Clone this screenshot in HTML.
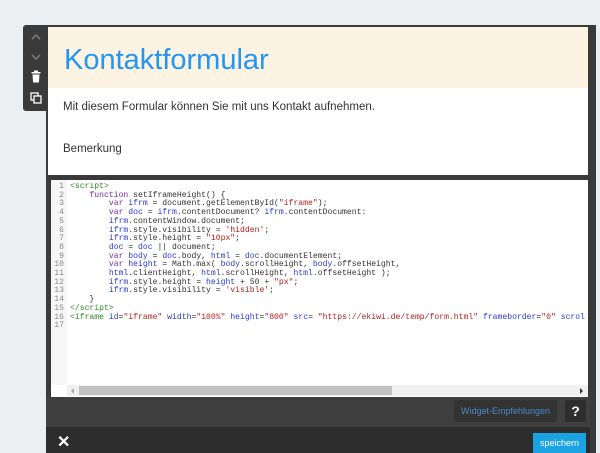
<!DOCTYPE html>
<html><head><meta charset="utf-8"><style>
body{margin:0;width:600px;height:453px;overflow:hidden;background:#eceff2;font-family:"Liberation Sans",sans-serif;position:relative}
.abs{position:absolute}
.code{font-family:"Liberation Mono",monospace;font-size:8.1px;line-height:8.7px;white-space:pre;color:#333}
.k{color:#7a2ca0}.v{color:#2a3ad0}.s{color:#b51d1d}.t{color:#2a8a2a}
</style></head><body>
<div class="abs" style="left:23px;top:25px;width:26px;height:86px;background:#3a3a3a;border-radius:3px 0 0 3px"></div>
<svg class="abs" style="left:28px;top:30px" width="16" height="78" viewBox="0 0 16 78">
<path d="M4 9 L8 5 L12 9" stroke="#777" stroke-width="1.6" fill="none"/>
<path d="M4 25 L8 29 L12 25" stroke="#777" stroke-width="1.6" fill="none"/>
<rect x="3.5" y="42" width="9" height="1.5" fill="#fff"/><rect x="6" y="40.5" width="4" height="1.5" fill="#fff"/>
<path d="M4.5 44.5 h7 l-0.6 8 h-5.8z" fill="#fff"/>
<rect x="3" y="63" width="7" height="7" fill="none" stroke="#fff" stroke-width="1.3"/>
<rect x="6" y="66" width="7" height="7" fill="#3a3a3a" stroke="#fff" stroke-width="1.3"/>
</svg>
<div class="abs" style="left:46px;top:25px;width:550px;height:428px;background:#3a3a3a"></div>
<div class="abs" style="left:48px;top:27px;width:540px;height:148px;background:#fff"></div>
<div class="abs" style="left:48px;top:27px;width:540px;height:61px;background:#fdf3e2"></div>
<div class="abs" style="left:64px;top:44px;font-size:29px;color:#2196f3">Kontaktformular</div>
<div class="abs" style="left:63px;top:101px;font-size:11.5px;color:#333">Mit diesem Formular können Sie mit uns Kontakt aufnehmen.</div>
<div class="abs" style="left:63px;top:143px;font-size:11.5px;color:#333">Bemerkung</div>
<div class="abs" style="left:51px;top:180px;width:537px;height:217px;background:#fff"></div>
<div class="abs" style="left:51px;top:180px;width:16px;height:205px;background:#f6f6f6"></div>
<div class="abs code" style="left:52px;top:183px;color:#888;text-align:right;width:12px">1
2
3
4
5
6
7
8
9
10
11
12
13
14
15
16
17</div>
<div class="abs code" style="left:70px;top:183px;width:516px;overflow:hidden"><span class="t">&lt;script&gt;</span>
    <span class="k">function</span> setIframeHeight() {
        <span class="k">var</span> <span class="v">ifrm</span> = document.getElementById(<span class="s">"iframe"</span>);
        <span class="k">var</span> <span class="v">doc</span> = <span class="v">ifrm</span>.contentDocument? <span class="v">ifrm</span>.contentDocument:
        <span class="v">ifrm</span>.contentWindow.document;
        <span class="v">ifrm</span>.style.visibility = <span class="s">'hidden'</span>;
        <span class="v">ifrm</span>.style.height = <span class="s">"10px"</span>;
        <span class="v">doc</span> = <span class="v">doc</span> || document;
        <span class="k">var</span> <span class="v">body</span> = <span class="v">doc</span>.body, <span class="v">html</span> = <span class="v">doc</span>.documentElement;
        <span class="k">var</span> <span class="v">height</span> = Math.max( <span class="v">body</span>.scrollHeight, <span class="v">body</span>.offsetHeight,
        <span class="v">html</span>.clientHeight, <span class="v">html</span>.scrollHeight, <span class="v">html</span>.offsetHeight );
        <span class="v">ifrm</span>.style.height = <span class="v">height</span> + 50 + <span class="s">"px"</span>;
        <span class="v">ifrm</span>.style.visibility = <span class="s">'visible'</span>;
    }
<span class="t">&lt;/script&gt;</span>
<span class="t">&lt;iframe</span> <span class="v">id</span>=<span class="s">"iframe"</span> <span class="v">width</span>=<span class="s">"100%"</span> <span class="v">height</span>=<span class="s">"800"</span> <span class="v">src</span>= <span class="s">"https://ekiwi.de/temp/form.html"</span> <span class="v">frameborder</span>=<span class="s">"0"</span> <span class="v">scrolling</span></div>
<div class="abs" style="left:67px;top:385px;width:521px;height:11px;background:#f0f0f0"></div>
<div class="abs" style="left:79px;top:386px;width:313px;height:9px;background:#c2c2c2"></div>
<div class="abs" style="left:71px;top:388px;width:0;height:0;border:3px solid transparent;border-right-color:#aaa;border-left:0"></div>
<div class="abs" style="left:580px;top:388px;width:0;height:0;border:3px solid transparent;border-left-color:#333;border-right:0"></div>
<div class="abs" style="left:46px;top:397px;width:544px;height:30px;background:#3f3f3f"></div>
<div class="abs" style="left:454px;top:400px;width:103px;height:22px;background:#333;border-radius:2px;color:#4a8ac8;font-size:9px;line-height:22px;text-align:center">Widget-Empfehlungen</div>
<div class="abs" style="left:565px;top:400px;width:21px;height:22px;background:#2d2d2d;border-radius:2px;color:#fff;font-size:14px;font-weight:bold;line-height:22px;text-align:center">?</div>
<div class="abs" style="left:46px;top:427px;width:544px;height:26px;background:#2d2d2d"></div>
<div class="abs" style="left:57px;top:432px;color:#fff;font-size:16px;font-weight:bold">✕</div>
<div class="abs" style="left:533px;top:433px;width:53px;height:20px;background:#1aa3e0;color:#fff;font-size:9px;line-height:20px;text-align:center">speichern</div>
</body></html>
